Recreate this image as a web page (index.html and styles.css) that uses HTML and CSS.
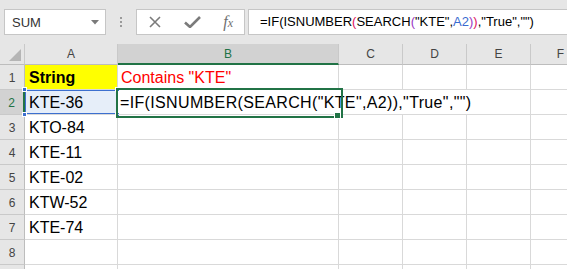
FILE: index.html
```html
<!DOCTYPE html>
<html lang="en">
<head>
    <meta charset="UTF-8">
    <title>SEARCH formula</title>
    <link rel="stylesheet" href="styles.css">
</head>
<body>
    <div class="ribbon">
        <div class="name-box">
            <span>SUM</span>
            <svg class="caret" width="8" height="5" viewBox="0 0 8 5"><path d="M0 0h8L4 4.5z" fill="#7a7a7a"/></svg>
        </div>
        <div class="grip"><i></i><i></i><i></i></div>
        <div class="fx-buttons">
            <svg width="12" height="12" viewBox="0 0 12 12"><path d="M1 1L11 11M11 1L1 11" stroke="#7b7b7b" stroke-width="1.6" fill="none"/></svg>
            <svg width="17" height="12" viewBox="0 0 17 12"><path d="M1 6.5L6 11L16 1" stroke="#7b7b7b" stroke-width="2.6" fill="none"/></svg>
            <span class="fx">f<small>x</small></span>
        </div>
        <div class="formula-bar">=IF(ISNUMBER<span class="p1">(</span>SEARCH<span class="p2">(</span>"KTE",<span class="ref">A2</span><span class="p2">)</span><span class="p1">)</span>,"True","")</div>
    </div>

    <div class="sheet">
        <div class="hd corner"><svg width="12" height="12" viewBox="0 0 12 12"><path d="M12 0V12H0z" fill="#b5b5b5"/></svg></div>
        <div class="hd">A</div>
        <div class="hd active">B</div>
        <div class="hd">C</div>
        <div class="hd">D</div>
        <div class="hd">E</div>
        <div class="hd">F</div>

        <div class="rh">1</div>
        <div class="cell title">String</div>
        <div class="cell red">Contains "KTE"</div>
        <div class="cell"></div><div class="cell"></div><div class="cell"></div><div class="cell"></div>

        <div class="rh active">2</div>
        <div class="cell ref-cell">KTE-36<i class="h tl"></i><i class="h tr"></i><i class="h bl"></i><i class="h br"></i></div>
        <div class="cell edit-cell">=IF(ISNUMBER(SEARCH("KTE",A2)),"True","")</div>
        <div class="cell"></div>

        <div class="rh">3</div>
        <div class="cell">KTO-84</div>
        <div class="cell"></div><div class="cell"></div><div class="cell"></div><div class="cell"></div><div class="cell"></div>

        <div class="rh">4</div>
        <div class="cell">KTE-11</div>
        <div class="cell"></div><div class="cell"></div><div class="cell"></div><div class="cell"></div><div class="cell"></div>

        <div class="rh">5</div>
        <div class="cell">KTE-02</div>
        <div class="cell"></div><div class="cell"></div><div class="cell"></div><div class="cell"></div><div class="cell"></div>

        <div class="rh">6</div>
        <div class="cell">KTW-52</div>
        <div class="cell"></div><div class="cell"></div><div class="cell"></div><div class="cell"></div><div class="cell"></div>

        <div class="rh">7</div>
        <div class="cell">KTE-74</div>
        <div class="cell"></div><div class="cell"></div><div class="cell"></div><div class="cell"></div><div class="cell"></div>

        <div class="rh">8</div>
        <div class="cell"></div><div class="cell"></div><div class="cell"></div><div class="cell"></div><div class="cell"></div><div class="cell"></div>

        <!-- row 9 only peeks in at the bottom edge -->
        <div class="rh"></div>
        <div class="cell"></div><div class="cell"></div><div class="cell"></div><div class="cell"></div><div class="cell"></div><div class="cell"></div>
    </div>
</body>
</html>
```

FILE: styles.css
```css
/* Excel-like sheet with a formula being edited */
* {
    box-sizing: border-box;
}
body {
    margin: 0;
    width: 567px;
    height: 269px;
    overflow: hidden;
    background: #ffffff;
    font-family: "Liberation Sans", Arial, sans-serif;
}
.ribbon {
    display: flex;
    align-items: center;
    height: 44px;
    padding-left: 4px;
    background: #e6e6e6;
}
.name-box {
    display: flex;
    align-items: center;
    justify-content: space-between;
    width: 102px;
    height: 26px;
    padding: 0 6px 0 7px;
    background: #ffffff;
    border: 1px solid #c6c6c6;
    font-size: 13px;
    color: #333333;
}
.grip {
    display: flex;
    flex-direction: column;
    gap: 2px;
    margin: 0 14px;
}
.grip i {
    width: 2px;
    height: 2px;
    background: #9a9a9a;
}
.fx-buttons {
    display: flex;
    align-items: center;
    justify-content: space-between;
    width: 109px;
    height: 26px;
    padding: 0 11px 0 12px;
    background: #ffffff;
    border: 1px solid #c6c6c6;
}
.fx {
    font-family: "Liberation Serif", serif;
    font-style: italic;
    font-size: 16px;
    color: #6f6f6f;
}
.fx small {
    font-size: 12px;
}
.formula-bar {
    flex: 1;
    height: 26px;
    margin-left: 3px;
    margin-right: -10px;
    padding-left: 11px;
    line-height: 24px;
    background: #ffffff;
    border: 1px solid #c6c6c6;
    font-size: 13px;
    color: #000000;
    white-space: nowrap;
}
.formula-bar .p1 {
    color: #e0115f;
}
.formula-bar .p2 {
    color: #9b36c4;
}
.formula-bar .ref {
    color: #3a6bd0;
}
.sheet {
    display: grid;
    grid-template-columns: 25px 93px 221px 64px 64px 64px 60px;
    grid-template-rows: 21px repeat(9, 25px);
}
.hd {
    display: flex;
    align-items: center;
    justify-content: center;
    background: #e6e6e6;
    border-right: 1px solid #c9c9c9;
    border-bottom: 1px solid #bdbdbd;
    font-size: 12px;
    color: #444444;
}
.hd.corner {
    justify-content: flex-end;
    align-items: flex-end;
    padding: 0 3px 3px 0;
}
.hd.active {
    background: #d2d2d2;
    color: #217346;
    border-bottom: 2px solid #217346;
}
.rh {
    display: flex;
    align-items: center;
    justify-content: center;
    padding-top: 2px;
    background: #e6e6e6;
    border-right: 1px solid #bdbdbd;
    border-bottom: 1px solid #c9c9c9;
    font-size: 12px;
    color: #444444;
}
.rh.active {
    background: #d2d2d2;
    color: #217346;
    border-right: 2px solid #217346;
}
.cell {
    display: flex;
    align-items: flex-end;
    padding: 0 3px 1px 4px;
    line-height: 20px;
    border-right: 1px solid #d9d9d9;
    border-bottom: 1px solid #d9d9d9;
    font-size: 16px;
    color: #000000;
    white-space: nowrap;
}
.cell.title {
    background: #ffff00;
    font-weight: bold;
}
.cell.red {
    color: #ff0000;
    padding-left: 3px;
}
.ref-cell {
    position: relative;
    background: #e6eef9;
    box-shadow: inset 0 0 0 1px #3c6fcf;
}
.h {
    position: absolute;
    width: 5px;
    height: 5px;
    background: #3c6fcf;
    border: 1px solid #ffffff;
}
.h.tl { left: -3px; top: -3px; }
.h.tr { right: -3px; top: -3px; }
.h.bl { left: -3px; bottom: -3px; }
.h.br { right: -3px; bottom: -3px; }
.edit-cell {
    position: relative;
    grid-column: span 4;
    padding-left: 2px;
    letter-spacing: 0.35px;
}
/* green frame of the active cell */
.edit-cell::before {
    content: "";
    position: absolute;
    left: -2px;
    top: -2px;
    width: 223px;
    height: 26px;
    border: 2px solid #217346;
}
/* fill handle */
.edit-cell::after {
    content: "";
    position: absolute;
    left: 216px;
    top: 22px;
    width: 5px;
    height: 5px;
    background: #217346;
    border: 1px solid #ffffff;
}
```
